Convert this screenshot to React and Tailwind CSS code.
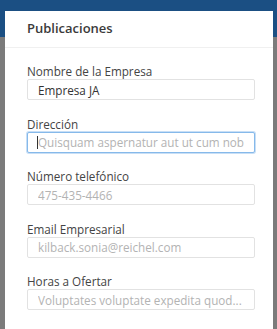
import React from 'react';

const fields = [
  { label: 'Nombre de la Empresa', value: 'Empresa JA' },
  { label: 'Dirección', placeholder: 'Quisquam aspernatur aut ut cum nobis', focused: true },
  { label: 'Número telefónico', placeholder: '475-435-4466' },
  { label: 'Email Empresarial', placeholder: 'kilback.sonia@reichel.com' },
  { label: 'Horas a Ofertar', placeholder: 'Voluptates voluptate expedita quod...' },
];

const Field = ({ label, value, placeholder, focused }) => (
  <div className="mb-[16.5px]">
    <label className="block text-[11.7px] leading-[14px] text-[#444] mb-[1px]">{label}</label>
    <div className="relative">
      <input
        type="text"
        defaultValue={value}
        placeholder={placeholder}
        readOnly
        className={`block w-full h-[21px] px-[10px] text-[11.7px] text-[#333] placeholder:text-[#b3b3b3] bg-white rounded-[2px] outline-none border ${
          focused ? 'border-[#86b9ea] shadow-[0_0_0_1px_rgba(134,185,234,0.45)]' : 'border-[#e2e2e2]'
        }`}
      />
      {focused && <span className="absolute left-[10px] top-[4px] h-[13px] w-px bg-[#333]"></span>}
    </div>
  </div>
);

export default function App() {
  return (
    <div className="relative h-[329px] w-full overflow-hidden bg-[#7b7b7b] font-['Open_Sans',sans-serif]">
      <div className="h-[37px] bg-[#1b4f83]"></div>

      {/* modal */}
      <div className="absolute left-[5px] right-[4px] top-[11px] bottom-0 bg-white">
        <div className="h-[37px] px-[22px] flex items-center border-b border-[#f0f0f0]">
          <h2 className="text-[13px] font-semibold text-[#3a3a3a]">Publicaciones</h2>
        </div>
        <div className="px-[22px] pt-[16px] pr-[18px]">
          {fields.map((f) => (
            <Field key={f.label} {...f} />
          ))}
        </div>
      </div>
    </div>
  );
}
